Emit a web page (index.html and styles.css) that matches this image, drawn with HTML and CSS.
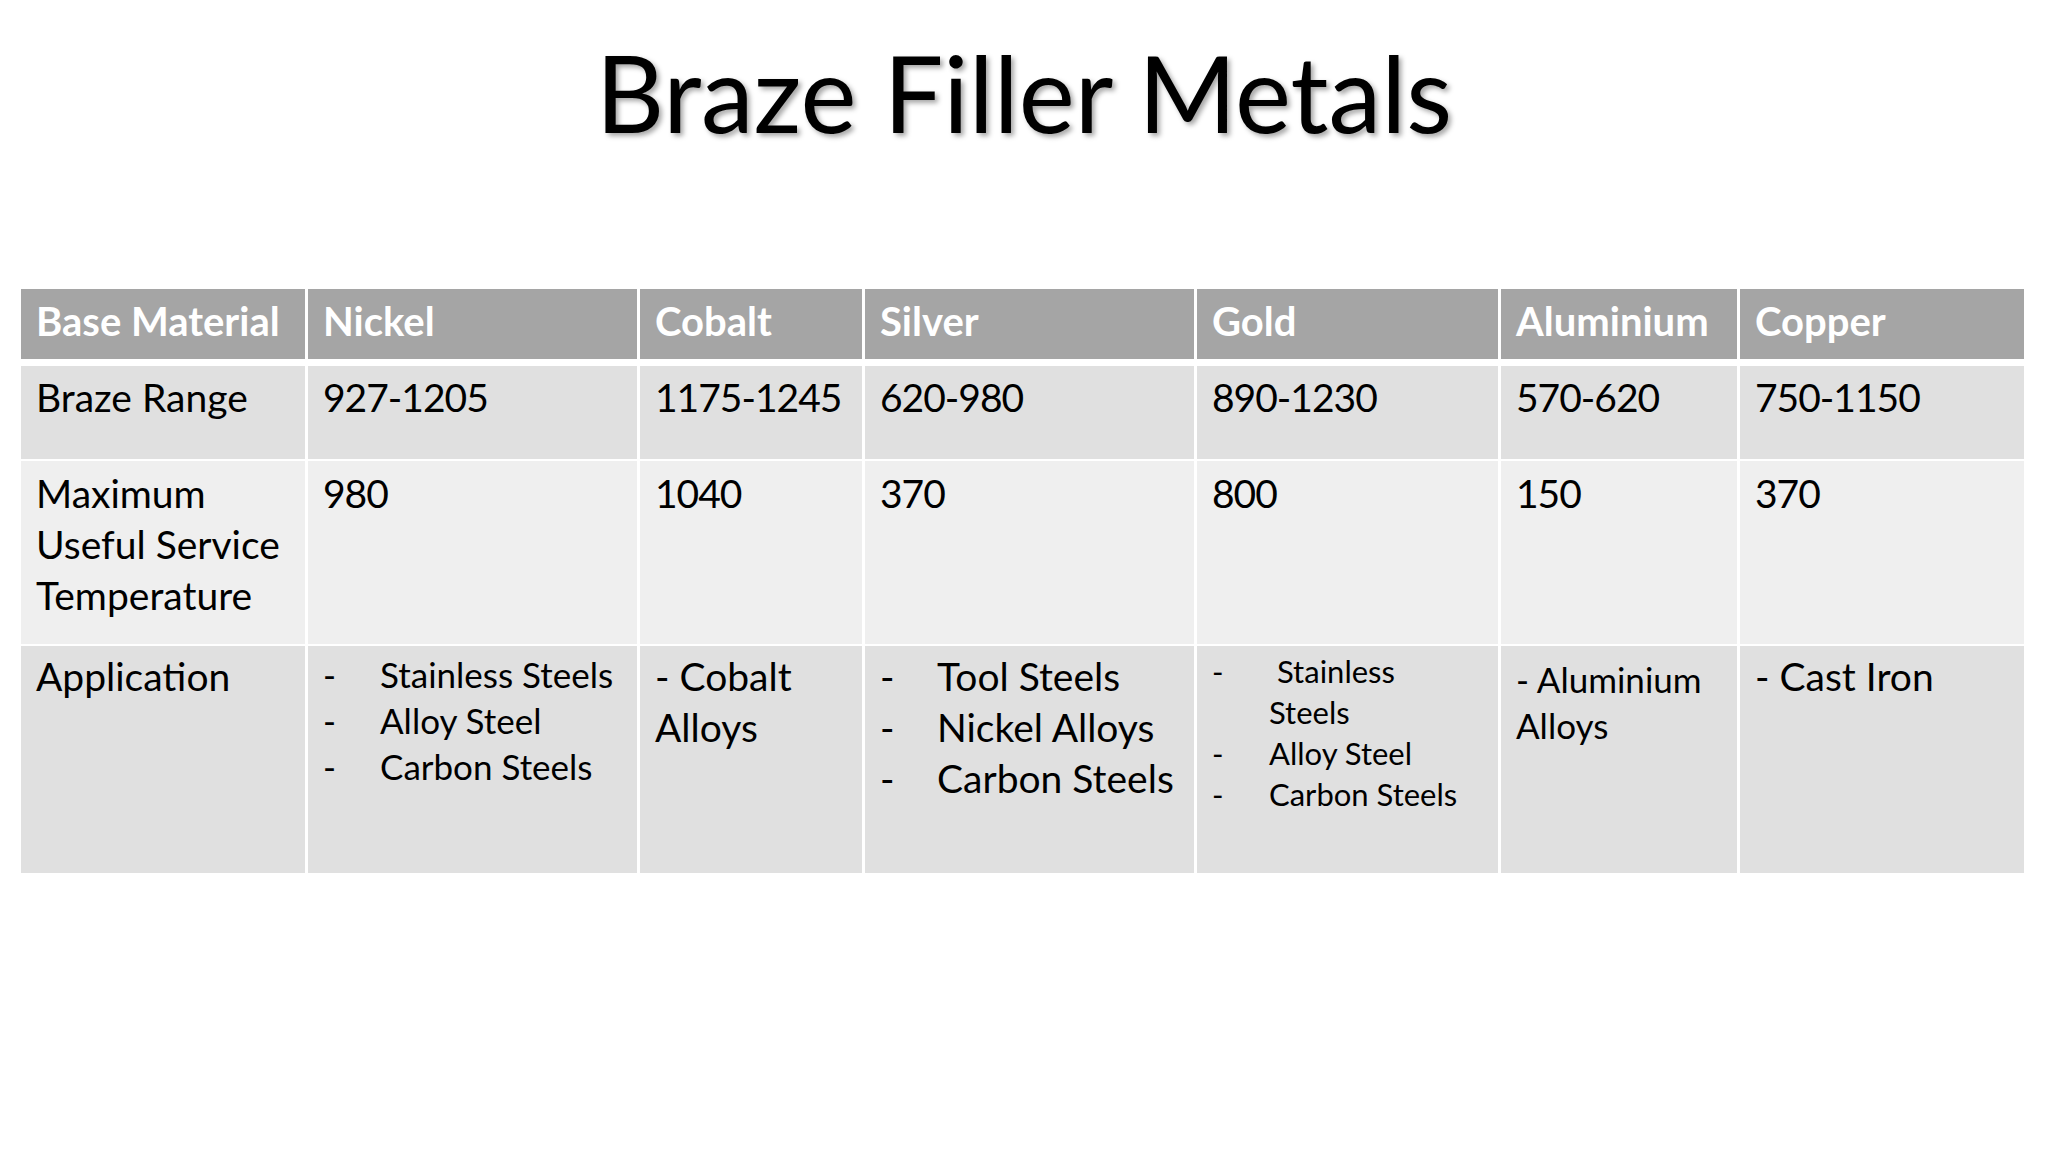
FILE: index.html
```html
<!DOCTYPE html>
<html>
<head>
<meta charset="utf-8">
<link rel="stylesheet" href="styles.css">
</head>
<body>
<div class="slide">
  <h1 class="title">Braze Filler Metals</h1>
  <div class="table">
    <div class="cell th">Base Material</div>
    <div class="cell th">Nickel</div>
    <div class="cell th">Cobalt</div>
    <div class="cell th">Silver</div>
    <div class="cell th">Gold</div>
    <div class="cell th">Aluminium</div>
    <div class="cell th">Copper</div>

    <div class="cell r1">Braze Range</div>
    <div class="cell r1 num">927-1205</div>
    <div class="cell r1 num">1175-1245</div>
    <div class="cell r1 num">620-980</div>
    <div class="cell r1 num">890-1230</div>
    <div class="cell r1 num">570-620</div>
    <div class="cell r1 num">750-1150</div>

    <div class="cell r2">Maximum<br>Useful Service<br>Temperature</div>
    <div class="cell r2 num">980</div>
    <div class="cell r2 num">1040</div>
    <div class="cell r2 num">370</div>
    <div class="cell r2 num">800</div>
    <div class="cell r2 num">150</div>
    <div class="cell r2 num">370</div>

    <div class="cell r3">Application</div>
    <div class="cell r3 s18">
      <div class="li"><span class="dash">-</span><span>Stainless Steels</span></div>
      <div class="li"><span class="dash">-</span><span>Alloy Steel</span></div>
      <div class="li"><span class="dash">-</span><span>Carbon Steels</span></div>
    </div>
    <div class="cell r3">- Cobalt<br>Alloys</div>
    <div class="cell r3">
      <div class="li"><span class="dash">-</span><span>Tool Steels</span></div>
      <div class="li"><span class="dash">-</span><span>Nickel Alloys</span></div>
      <div class="li"><span class="dash">-</span><span>Carbon Steels</span></div>
    </div>
    <div class="cell r3 s16">
      <div class="li"><span class="dash">-</span><span class="lead">Stainless<br><span class="back">Steels</span></span></div>
      <div class="li"><span class="dash">-</span><span>Alloy Steel</span></div>
      <div class="li"><span class="dash">-</span><span>Carbon Steels</span></div>
    </div>
    <div class="cell r3 s18 alu">- Aluminium<br>Alloys</div>
    <div class="cell r3">- Cast Iron</div>
  </div>
</div>
</body>
</html>
```

FILE: styles.css
```css
html, body {
  margin: 0;
  padding: 0;
  background: #ffffff;
}

body {
  width: 2048px;
  height: 1152px;
  overflow: hidden;
  font-family: Lato, "Open Sans", sans-serif;
  color: #000000;
}

.slide {
  width: 2048px;
  height: 1152px;
  padding-top: 39px;
  box-sizing: border-box;
}

.title {
  margin: 0;
  font-weight: 400;
  font-size: 106px;
  line-height: 106px;
  text-align: center;
  text-shadow: 3px 3px 5px rgba(0, 0, 0, 0.35);
}

.table {
  margin-top: 144px;
  margin-left: 21px;
  display: grid;
  grid-template-columns: 284px 329px 222px 329px 301px 236px 284px;
  grid-template-rows: 75px 93px 183px 227px;
  column-gap: 3px;
  row-gap: 2px;
  width: 2003px;
}

.cell {
  box-sizing: border-box;
  padding: 5px 15px 0 15px;
  font-size: 39px;
  line-height: 51px;
  white-space: nowrap;
}

.th {
  background: #a5a5a5;
  color: #ffffff;
  font-weight: 700;
  font-size: 40px;
  margin-bottom: 5px;
  padding-top: 7px;
}

.r1 {
  background: #e0e0e0;
  padding-top: 6px;
}

.r2 {
  background: #efefef;
  padding-top: 7px;
}

.r3 {
  background: #e0e0e0;
  padding-top: 5px;
}

.num {
  letter-spacing: -1px;
}

.s18 {
  font-size: 35px;
  line-height: 46px;
}

.s16 {
  font-size: 31px;
  line-height: 41px;
}

.alu {
  padding-top: 10px;
}

.li {
  display: flex;
}

.dash {
  width: 57px;
  flex: none;
}

.lead {
  padding-left: 8px;
}

.back {
  margin-left: -8px;
}
```
